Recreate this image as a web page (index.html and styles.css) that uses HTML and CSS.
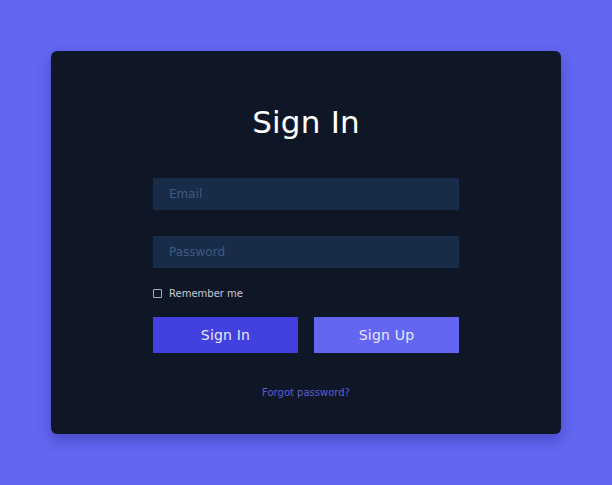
FILE: index.html
```html
<!DOCTYPE html>
<html lang="en">
<head>
<meta charset="utf-8">
<title>Sign In</title>
<link rel="stylesheet" href="styles.css">
</head>
<body>
<div class="page">
  <form class="card">
    <h1 class="title">Sign In</h1>
    <div class="fields">
      <input class="field" type="email" placeholder="Email">
      <input class="field" type="password" placeholder="Password">
    </div>
    <label class="remember"><span class="box"></span><span>Remember me</span></label>
    <div class="actions">
      <button type="button" class="btn btn-primary">Sign In</button>
      <button type="button" class="btn btn-secondary">Sign Up</button>
    </div>
    <a class="forgot" href="#">Forgot password?</a>
  </form>
</div>
</body>
</html>
```
FILE: styles.css
```css
* { box-sizing: border-box; }
html, body { margin: 0; padding: 0; }
body {
  background: #6366f1;
  font-family: "DejaVu Sans", "Liberation Sans", sans-serif;
  width: 612px;
  height: 485px;
  overflow: hidden;
}
.page {
  padding: 51px 51px 0 51px;
}
.card {
  width: 510px;
  height: 383px;
  background: #0f1726;
  border-radius: 6px;
  box-shadow: 0 6px 14px rgba(40, 40, 140, 0.45);
  display: flex;
  flex-direction: column;
  align-items: center;
  padding-top: 51px;
}
.title {
  margin: 0;
  height: 40px;
  line-height: 41px;
  font-size: 31px;
  font-weight: 400;
  color: #ffffff;
  letter-spacing: 0.2px;
}
.fields {
  margin-top: 36px;
  width: 306px;
  display: flex;
  flex-direction: column;
  gap: 26px;
}
.field {
  display: block;
  width: 306px;
  height: 32px;
  border: none;
  outline: none;
  background: #182b48;
  padding: 0 16px;
  font-family: inherit;
  font-size: 12px;
  letter-spacing: 0;
  color: #c0cce0;
}
.field::placeholder { color: #3f5a82; }
.remember {
  margin-top: 19px;
  width: 306px;
  height: 12px;
  display: flex;
  align-items: center;
  gap: 7px;
  font-size: 10px;
  letter-spacing: 0;
  color: #c4cad6;
}
.box {
  width: 9px;
  height: 9px;
  border: 1px solid #a9afbc;
  border-radius: 1px;
}
.actions {
  margin-top: 18px;
  width: 306px;
  display: flex;
  gap: 16px;
}
.btn {
  flex: 1;
  height: 36px;
  border: none;
  font-family: inherit;
  font-size: 14px;
  letter-spacing: 0.2px;
  color: #e6e8ff;
  cursor: pointer;
}
.btn-primary { background: #4340e0; }
.btn-secondary { background: #6366f1; }
.forgot {
  margin-top: 32px;
  height: 14px;
  line-height: 16px;
  font-size: 10px;
  letter-spacing: 0;
  color: #5a5ed8;
  text-decoration: none;
}
```
